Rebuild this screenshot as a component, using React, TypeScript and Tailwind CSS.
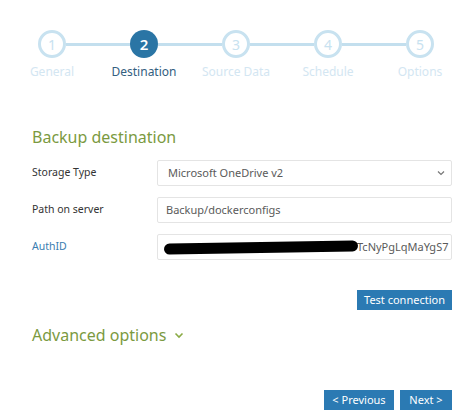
import React from "react";

const steps = ["General", "Destination", "Source Data", "Schedule", "Options"];

export default function App() {
  const font = { fontFamily: '"Noto Sans", "Open Sans", sans-serif' };
  return (
    <div className="w-[474px] h-[420px] bg-white overflow-hidden" style={font}>
      <div className="flex pt-[30px] pl-[6px]">
        {steps.map((s, i) => {
          const active = i === 1;
          return (
            <div key={s} className="w-[92px] flex flex-col items-center">
              <div className="flex items-center w-full">
                <div className={`h-[3px] flex-1 ${i === 0 ? "bg-transparent" : "bg-[#c3dfee]"}`} />
                <div
                  className={
                    active
                      ? "w-[28px] h-[28px] rounded-full bg-[#2a75a5] text-white flex items-center justify-center text-[15px] font-semibold"
                      : "w-[28px] h-[28px] rounded-full border-[3px] border-[#c8e2f0] text-[#c8e2f0] flex items-center justify-center text-[14px]"
                  }
                >
                  {i + 1}
                </div>
                <div className={`h-[3px] flex-1 ${i === 4 ? "bg-transparent" : "bg-[#c3dfee]"}`} />
              </div>
              <div
                className={`mt-[6px] text-[12px] leading-[16px] whitespace-nowrap ${
                  active ? "text-[#33607f]" : "text-[#d3e6f2]"
                }`}
              >
                {s}
              </div>
            </div>
          );
        })}
      </div>

      <div className="pl-[32px] pr-[22px]">
        <div className="mt-[46px] text-[16px] leading-[22px] text-[#7b9a3f]">Backup destination</div>

        <div className="mt-[12px] flex flex-col gap-[11px]">
          <div className="flex items-center">
            <div className="w-[125px] text-[10.5px] text-[#333]">Storage Type</div>
            <div className="flex-1 h-[26px] border border-[#e4e4e4] rounded-[2px] flex items-center justify-between pl-[10px] pr-[6px] text-[11px] text-[#5a5a5a]">
              <span>Microsoft OneDrive v2</span>
              <svg width="8" height="6" viewBox="0 0 8 6">
                <path d="M1 1.5 L4 4.5 L7 1.5" fill="none" stroke="#777" strokeWidth="1.2" />
              </svg>
            </div>
          </div>
          <div className="flex items-center">
            <div className="w-[125px] text-[10.5px] text-[#333]">Path on server</div>
            <div className="flex-1 h-[26px] border border-[#e4e4e4] rounded-[2px] flex items-center pl-[8px] text-[11px] text-[#5a5a5a]">
              Backup/dockerconfigs
            </div>
          </div>
          <div className="flex items-center">
            <div className="w-[125px] text-[10.5px] text-[#3a7db0]">AuthID</div>
            <div className="flex-1 h-[26px] border border-[#e4e4e4] rounded-[2px] flex items-center pl-[6px] text-[11px] text-[#5a5a5a] overflow-hidden">
              <div className="w-[194px] h-[11px] bg-black rounded-full shrink-0 -rotate-1" />
              <span className="-ml-[1px]">TcNyPgLqMaYgS7</span>
            </div>
          </div>
        </div>

        <div className="mt-[30px] flex justify-end">
          <button className="h-[20px] w-[95px] bg-[#2b7ab3] text-white text-[11px] leading-[20px]">
            Test connection
          </button>
        </div>

        <div className="mt-[14px] flex items-center gap-[8px] text-[16px] leading-[22px] text-[#7b9a3f]">
          <span>Advanced options</span>
          <svg width="10" height="7" viewBox="0 0 10 7">
            <path d="M1.5 1.5 L5 5 L8.5 1.5" fill="none" stroke="#8aab45" strokeWidth="1.6" />
          </svg>
        </div>

        <div className="mt-[44px] flex justify-end gap-[6px]">
          <button className="h-[20px] w-[70px] bg-[#2b7ab3] text-white text-[11px] leading-[20px]">
            &lt; Previous
          </button>
          <button className="h-[20px] w-[52px] bg-[#2b7ab3] text-white text-[11px] leading-[20px]">
            Next &gt;
          </button>
        </div>
      </div>
    </div>
  );
}
